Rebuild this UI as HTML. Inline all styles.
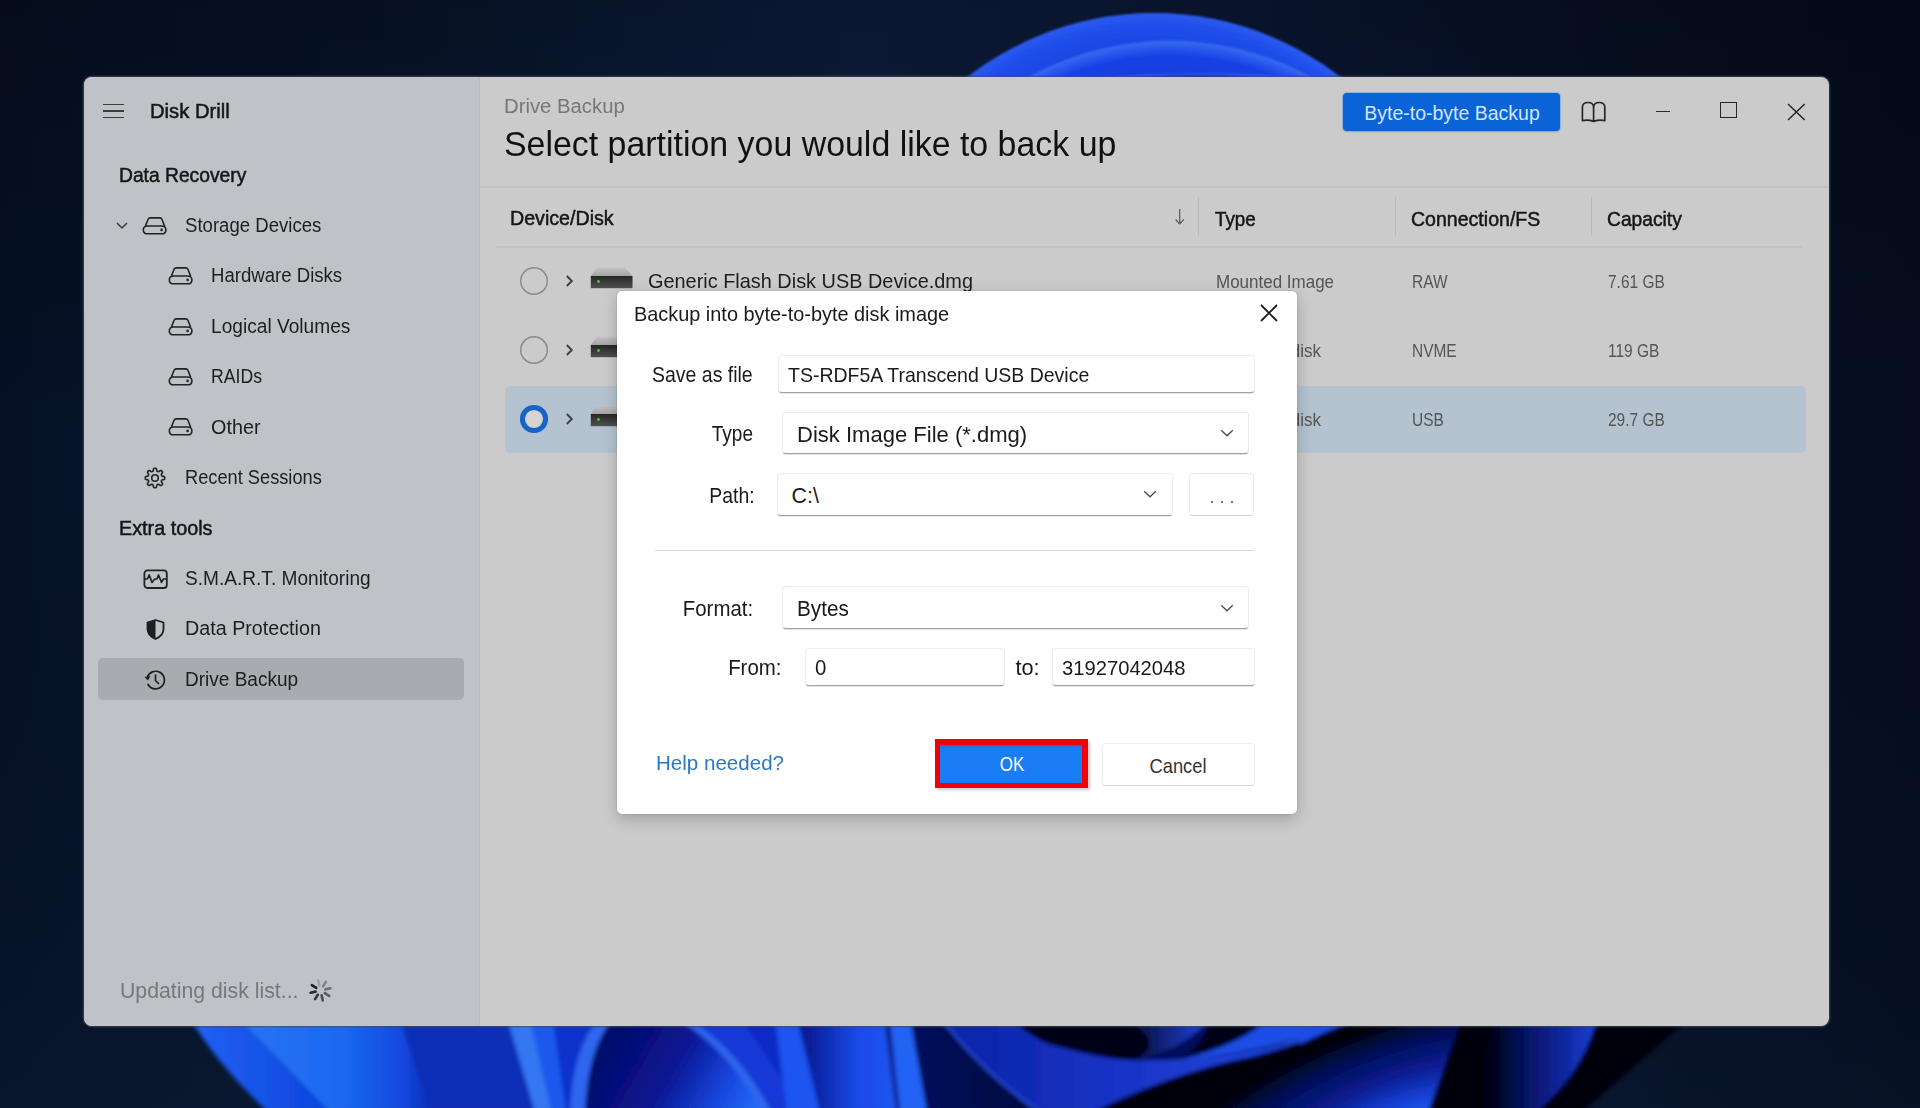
<!DOCTYPE html>
<html><head><meta charset="utf-8">
<style>
html,body{margin:0;padding:0;width:1920px;height:1108px;overflow:hidden;background:#0b1526;}
body{position:relative;font-family:"Liberation Sans", sans-serif;}
.t{position:absolute;white-space:pre;font-family:"Liberation Sans", sans-serif;}
svg{overflow:visible}
</style></head><body>
<svg style="position:absolute;left:0px;top:0px;" width="1920" height="1108" viewBox="0 0 1920 1108">
<defs>
<linearGradient id="bgG" x1="0" y1="0" x2="1920" y2="0" gradientUnits="userSpaceOnUse">
 <stop offset="0" stop-color="#061126"/>
 <stop offset="0.22" stop-color="#091730"/>
 <stop offset="0.45" stop-color="#0f2146"/>
 <stop offset="0.65" stop-color="#0c1a3a"/>
 <stop offset="0.88" stop-color="#061024"/>
 <stop offset="1" stop-color="#050d1f"/>
</linearGradient>
<linearGradient id="bgV" x1="0" y1="0" x2="0" y2="1108" gradientUnits="userSpaceOnUse">
 <stop offset="0" stop-color="#000000" stop-opacity="0.28"/>
 <stop offset="0.4" stop-color="#000000" stop-opacity="0"/>
 <stop offset="1" stop-color="#1a3050" stop-opacity="0.12"/>
</linearGradient>
<radialGradient id="arcO" cx="1154" cy="317" r="304" gradientUnits="userSpaceOnUse">
 <stop offset="0.85" stop-color="#1642de"/>
 <stop offset="0.97" stop-color="#2150ea"/>
 <stop offset="1" stop-color="#2d5cf0"/>
</radialGradient>
<radialGradient id="arcI" cx="1170" cy="335" r="294" gradientUnits="userSpaceOnUse">
 <stop offset="0.8" stop-color="#1235d0"/>
 <stop offset="0.95" stop-color="#1842e4"/>
 <stop offset="0.99" stop-color="#3062f0"/>
 <stop offset="1" stop-color="#3f6ef2"/>
</radialGradient>
<linearGradient id="pA" x1="0" y1="0" x2="1" y2="0">
 <stop offset="0" stop-color="#2a66f6"/>
 <stop offset="0.35" stop-color="#1f5cf4"/>
 <stop offset="0.7" stop-color="#0c3ad6"/>
 <stop offset="1" stop-color="#0a30c4"/>
</linearGradient>
<linearGradient id="pB" x1="0" y1="0" x2="1" y2="1">
 <stop offset="0" stop-color="#0a2aa8"/>
 <stop offset="1" stop-color="#2a66f8"/>
</linearGradient>
<linearGradient id="pC" x1="0" y1="0" x2="1" y2="0">
 <stop offset="0" stop-color="#0a2bb8"/>
 <stop offset="0.5" stop-color="#1a52ee"/>
 <stop offset="1" stop-color="#0c33c0"/>
</linearGradient>
<linearGradient id="pD" x1="0" y1="0" x2="1" y2="0">
 <stop offset="0" stop-color="#1640d0"/>
 <stop offset="1" stop-color="#0a2a9a"/>
</linearGradient>
<filter id="soft1" x="-10%" y="-10%" width="120%" height="120%"><feGaussianBlur stdDeviation="0.8"/></filter>
<filter id="soft" x="-5%" y="-50%" width="110%" height="200%"><feGaussianBlur stdDeviation="2"/></filter>
<linearGradient id="gL1" x1="190" y1="0" x2="330" y2="0" gradientUnits="userSpaceOnUse"><stop offset="0" stop-color="#2262f4"/><stop offset="1" stop-color="#0c44dc"/></linearGradient>
<linearGradient id="gL2" x1="240" y1="0" x2="430" y2="0" gradientUnits="userSpaceOnUse"><stop offset="0" stop-color="#2a74f4"/><stop offset="0.55" stop-color="#1a68f0"/><stop offset="0.85" stop-color="#1448e0"/><stop offset="1" stop-color="#0b30bc"/></linearGradient>
<linearGradient id="gCurl" x1="610" y1="1030" x2="750" y2="1112" gradientUnits="userSpaceOnUse"><stop offset="0" stop-color="#050a68"/><stop offset="0.45" stop-color="#081692"/><stop offset="0.8" stop-color="#1848e0"/><stop offset="1" stop-color="#2266f6"/></linearGradient>
<linearGradient id="gMid" x1="800" y1="0" x2="895" y2="0" gradientUnits="userSpaceOnUse"><stop offset="0" stop-color="#05158a"/><stop offset="0.6" stop-color="#1a4ae8"/><stop offset="1" stop-color="#1a55f0"/></linearGradient>
<linearGradient id="gDk" x1="910" y1="0" x2="1030" y2="0" gradientUnits="userSpaceOnUse"><stop offset="0" stop-color="#04105e"/><stop offset="1" stop-color="#020840"/></linearGradient>
<linearGradient id="gBand" x1="950" y1="0" x2="1350" y2="0" gradientUnits="userSpaceOnUse"><stop offset="0" stop-color="#0a24a6"/><stop offset="0.4" stop-color="#1833c4"/><stop offset="0.8" stop-color="#1f44dc"/><stop offset="1" stop-color="#2a58ee"/></linearGradient><radialGradient id="glow2" cx="0" cy="0" r="1" gradientUnits="userSpaceOnUse" gradientTransform="translate(1415 1125) rotate(-18) scale(270 105)"><stop offset="0" stop-color="#2464fa"/><stop offset="0.22" stop-color="#1844dc"/><stop offset="0.5" stop-color="#081c90"/><stop offset="0.78" stop-color="#040e58"/><stop offset="1" stop-color="#01030e"/></radialGradient>
<radialGradient id="glow" cx="1390" cy="1118" r="110" gradientUnits="userSpaceOnUse"><stop offset="0" stop-color="#2058f6"/><stop offset="0.35" stop-color="#123ad0"/><stop offset="0.7" stop-color="#061888" stop-opacity="0.8"/><stop offset="1" stop-color="#020838" stop-opacity="0"/></radialGradient>
<linearGradient id="gCres" x1="1120" y1="0" x2="1210" y2="0" gradientUnits="userSpaceOnUse"><stop offset="0" stop-color="#020418"/><stop offset="1" stop-color="#2244e4"/></linearGradient>
<linearGradient id="gLow" x1="1100" y1="0" x2="1460" y2="0" gradientUnits="userSpaceOnUse"><stop offset="0" stop-color="#010208"/><stop offset="0.45" stop-color="#020838"/><stop offset="0.8" stop-color="#071a90"/><stop offset="1" stop-color="#0a24a8"/></linearGradient>
<linearGradient id="gBlk" x1="1420" y1="0" x2="1530" y2="0" gradientUnits="userSpaceOnUse"><stop offset="0" stop-color="#0a24a8" stop-opacity="0"/><stop offset="0.35" stop-color="#010208"/><stop offset="0.65" stop-color="#010208"/><stop offset="1" stop-color="#06146a" stop-opacity="0"/></linearGradient>
<linearGradient id="gPD" x1="1470" y1="0" x2="1597" y2="0" gradientUnits="userSpaceOnUse"><stop offset="0" stop-color="#010208" stop-opacity="0"/><stop offset="0.35" stop-color="#040c50"/><stop offset="0.7" stop-color="#0c2598"/><stop offset="1" stop-color="#1c40d4"/></linearGradient>
</defs>
<rect x="0" y="0" width="1920" height="1108" fill="url(#bgG)"/>
<rect x="0" y="0" width="1920" height="1108" fill="url(#bgV)"/>
<!-- top arcs -->
<g filter="url(#soft1)">
<circle cx="1154" cy="317" r="304" fill="url(#arcO)"/>
<circle cx="1170" cy="335" r="294" fill="url(#arcI)"/>
<ellipse cx="1200" cy="112" rx="110" ry="38" fill="#0f2cb6"/>
<path d="M1090 80 Q1200 68 1310 80" fill="none" stroke="#3560ea" stroke-width="2" opacity="0.8"/>
</g>
<!-- bottom petals -->
<g filter="url(#soft)">
<path d="M190,1018 Q218,1065 268,1112 L1582,1112 L1690,1018 Z" fill="#0c2cb8"/>
<path d="M190,1018 Q218,1065 268,1112 L330,1112 L239,1018 Z" fill="url(#gL1)"/>
<path d="M239,1018 L400,1018 L430,1112 L330,1112 Z" fill="url(#gL2)"/>
<path d="M400,1018 L509,1018 L537,1112 L430,1112 Z" fill="#0a2eb6"/>
<path d="M507,1018 L530,1018 L552,1112 L535,1112 Z" fill="#3676f2"/>
<path d="M530,1018 L553,1018 L566,1112 L552,1112 Z" fill="#1c58ee"/>
<path d="M553,1018 L602,1018 Q578,1050 573,1112 L566,1112 Z" fill="#0b33cc"/>
<path d="M600,1018 Q573,1045 570,1112 L772,1112 Q736,1045 686,1018 Z" fill="#2d66f0"/>
<path d="M613,1018 Q587,1050 585,1112 L762,1112 Q728,1048 676,1018 Z" fill="url(#gCurl)"/>
<path d="M686,1018 L740,1018 Q772,1060 800,1112 L772,1112 Q736,1045 686,1018 Z" fill="#1538d6"/>
<path d="M740,1018 L776,1018 L790,1112 L800,1112 Q772,1060 740,1018 Z" fill="#0c2bc6"/>
<path d="M775,1018 L797,1018 L820,1112 L787,1112 Z" fill="#1f55f0"/>
<path d="M797,1018 L884,1018 L900,1112 L820,1112 Z" fill="url(#gMid)"/>
<path d="M884,1018 L890,1018 L902,1112 L896,1112 Z" fill="#0a1c90"/>
<path d="M890,1018 L910,1018 L927,1112 L900,1112 Z" fill="#2262f5"/>
<path d="M910,1018 L941,1018 Q985,1075 1040,1112 L927,1112 Z" fill="url(#gDk)"/>
<path d="M1040,1112 Q1160,1079 1227,1062 Q1293,1049 1356,1018 L1690,1018 L1582,1112 Z" fill="#010208"/>
<path d="M1040,1112 Q1160,1079 1227,1062 Q1293,1049 1356,1018 L1462,1018 L1428,1112 Z" fill="url(#glow2)"/>
<path d="M1497,1018 L1597,1018 Q1585,1070 1537,1112 L1460,1112 Z" fill="url(#gPD)"/>
<path d="M941,1018 Q985,1075 1040,1112 L1093,1112 Q1160,1079 1227,1062 Q1293,1049 1356,1018 Z" fill="url(#gBand)"/>
<path d="M941,1018 Q985,1075 1040,1112" fill="none" stroke="#2c54e6" stroke-width="2"/>
<path d="M1010,1018 Q1040,1045 1060,1047 Q1100,1058 1127,1060 Q1200,1062 1280,1045 L1356,1018 Z" fill="#020418"/>
<path d="M1120,1018 L1210,1018 Q1185,1050 1135,1060 Q1170,1040 1120,1018 Z" fill="url(#gCres)"/>
<path d="M1210,1018 Q1185,1050 1135,1060 Q1200,1062 1280,1045 L1356,1018 L1270,1018 Q1240,1045 1180,1058 Q1205,1045 1210,1018 Z" fill="#030a5c"/>
<path d="M1270,1018 L1356,1018 Q1290,1048 1180,1060 Q1240,1045 1270,1018 Z" fill="#1e4ee6"/>
<path d="M1300,1018 L1355,1018 L1300,1044 Z" fill="#1c4ce8"/>
<path d="M1597,1018 L1690,1018 L1582,1112 L1537,1112 Q1585,1070 1597,1018 Z" fill="#02040e"/>
</g>
</svg><div style="position:absolute;left:84px;top:77px;width:1745px;height:949px;border-radius:8px;background:#cbcbcb;overflow:hidden;box-shadow:0 0 0 1.5px rgba(70,78,92,0.55);"></div><div style="position:absolute;left:84px;top:77px;width:396px;height:949px;border-radius:8px 0 0 8px;background:#bfc2c7;"></div><div style="position:absolute;left:478.5px;top:77px;width:1.5px;height:949px;background:#babac0;"></div><div style="position:absolute;left:480px;top:186px;width:1349px;height:2px;background:#c2c2c2;"></div><div style="position:absolute;left:103px;top:103.8px;width:21px;height:1.5999999999999943px;background:#3c3c3c;"></div><div style="position:absolute;left:103px;top:110.3px;width:21px;height:1.5999999999999943px;background:#3c3c3c;"></div><div style="position:absolute;left:103px;top:116.8px;width:21px;height:1.5999999999999943px;background:#3c3c3c;"></div><div class="t" style="left:149.5px;top:101.00px;font-size:20.35px;line-height:20.35px;font-weight:400;color:#161616;transform:scaleX(0.9933962264150942);transform-origin:0 0;-webkit-text-stroke:0.5px #161616;">Disk Drill</div><div class="t" style="left:119.2px;top:166.00px;font-size:19.93px;line-height:19.93px;font-weight:400;color:#161616;transform:scaleX(0.9660377358490566);transform-origin:0 0;-webkit-text-stroke:0.5px #161616;">Data Recovery</div><div class="t" style="left:119.2px;top:519.00px;font-size:19.93px;line-height:19.93px;font-weight:400;color:#161616;transform:scaleX(0.9933962264150942);transform-origin:0 0;-webkit-text-stroke:0.5px #161616;">Extra tools</div><svg style="position:absolute;left:116px;top:222px;" width="12" height="8" viewBox="0 0 12 8"><path d="M1 1 L6 6 L11 1" fill="none" stroke="#3a3a3a" stroke-width="1.5"/></svg><svg style="position:absolute;left:143px;top:216.5px;" width="24" height="18" viewBox="0 0 24 18"><path d="M2.4 9 L5.1 2.3 Q5.7 0.9 7.2 0.9 L16.8 0.9 Q18.3 0.9 18.9 2.3 L21.6 9 M4.6 9 L18.6 9 Q22.9 9 22.9 12.9 Q22.9 16.8 18.6 16.8 L4.6 16.8 Q0.3 16.8 0.3 12.9 Q0.3 9 4.6 9 Z" fill="none" stroke="#232323" stroke-width="1.6" stroke-linejoin="round"/><circle cx="18.6" cy="12.9" r="1.3" fill="#232323"/></svg><div class="t" style="left:184.8px;top:216.00px;font-size:19.34px;line-height:19.34px;font-weight:400;color:#1e1e1e;transform:scaleX(0.9615384615384615);transform-origin:0 0;">Storage Devices</div><svg style="position:absolute;left:169px;top:267.1px;" width="24" height="18" viewBox="0 0 24 18"><path d="M2.4 9 L5.1 2.3 Q5.7 0.9 7.2 0.9 L16.8 0.9 Q18.3 0.9 18.9 2.3 L21.6 9 M4.6 9 L18.6 9 Q22.9 9 22.9 12.9 Q22.9 16.8 18.6 16.8 L4.6 16.8 Q0.3 16.8 0.3 12.9 Q0.3 9 4.6 9 Z" fill="none" stroke="#232323" stroke-width="1.6" stroke-linejoin="round"/><circle cx="18.6" cy="12.9" r="1.3" fill="#232323"/></svg><div class="t" style="left:211.2px;top:266.00px;font-size:19.34px;line-height:19.34px;font-weight:400;color:#1e1e1e;transform:scaleX(0.9615384615384615);transform-origin:0 0;">Hardware Disks</div><svg style="position:absolute;left:169px;top:317.8px;" width="24" height="18" viewBox="0 0 24 18"><path d="M2.4 9 L5.1 2.3 Q5.7 0.9 7.2 0.9 L16.8 0.9 Q18.3 0.9 18.9 2.3 L21.6 9 M4.6 9 L18.6 9 Q22.9 9 22.9 12.9 Q22.9 16.8 18.6 16.8 L4.6 16.8 Q0.3 16.8 0.3 12.9 Q0.3 9 4.6 9 Z" fill="none" stroke="#232323" stroke-width="1.6" stroke-linejoin="round"/><circle cx="18.6" cy="12.9" r="1.3" fill="#232323"/></svg><div class="t" style="left:211.2px;top:317.00px;font-size:19.34px;line-height:19.34px;font-weight:400;color:#1e1e1e;transform:scaleX(0.9903846153846154);transform-origin:0 0;">Logical Volumes</div><svg style="position:absolute;left:169px;top:368.1px;" width="24" height="18" viewBox="0 0 24 18"><path d="M2.4 9 L5.1 2.3 Q5.7 0.9 7.2 0.9 L16.8 0.9 Q18.3 0.9 18.9 2.3 L21.6 9 M4.6 9 L18.6 9 Q22.9 9 22.9 12.9 Q22.9 16.8 18.6 16.8 L4.6 16.8 Q0.3 16.8 0.3 12.9 Q0.3 9 4.6 9 Z" fill="none" stroke="#232323" stroke-width="1.6" stroke-linejoin="round"/><circle cx="18.6" cy="12.9" r="1.3" fill="#232323"/></svg><div class="t" style="left:211.2px;top:367.00px;font-size:19.34px;line-height:19.34px;font-weight:400;color:#1e1e1e;transform:scaleX(0.9144230769230769);transform-origin:0 0;">RAIDs</div><svg style="position:absolute;left:169px;top:418.3px;" width="24" height="18" viewBox="0 0 24 18"><path d="M2.4 9 L5.1 2.3 Q5.7 0.9 7.2 0.9 L16.8 0.9 Q18.3 0.9 18.9 2.3 L21.6 9 M4.6 9 L18.6 9 Q22.9 9 22.9 12.9 Q22.9 16.8 18.6 16.8 L4.6 16.8 Q0.3 16.8 0.3 12.9 Q0.3 9 4.6 9 Z" fill="none" stroke="#232323" stroke-width="1.6" stroke-linejoin="round"/><circle cx="18.6" cy="12.9" r="1.3" fill="#232323"/></svg><div class="t" style="left:211.2px;top:418.00px;font-size:19.34px;line-height:19.34px;font-weight:400;color:#1e1e1e;transform:scaleX(1.0240384615384615);transform-origin:0 0;">Other</div><svg style="position:absolute;left:143.7px;top:466.5px;" width="22" height="22" viewBox="0 0 22 22"><path d="M20.75 11.00 L20.74 11.32 L20.70 11.64 L20.62 11.95 L20.43 12.24 L19.99 12.48 L19.24 12.64 L18.49 12.75 L18.04 12.89 L17.83 13.07 L17.70 13.27 L17.60 13.49 L17.51 13.70 L17.43 13.91 L17.35 14.13 L17.29 14.36 L17.32 14.65 L17.53 15.06 L17.98 15.67 L18.41 16.31 L18.54 16.79 L18.47 17.13 L18.31 17.41 L18.11 17.66 L17.89 17.89 L17.66 18.11 L17.41 18.31 L17.13 18.47 L16.79 18.54 L16.31 18.41 L15.67 17.98 L15.06 17.53 L14.65 17.32 L14.36 17.29 L14.13 17.35 L13.91 17.43 L13.70 17.51 L13.49 17.60 L13.27 17.70 L13.07 17.83 L12.89 18.04 L12.75 18.49 L12.64 19.24 L12.48 19.99 L12.24 20.43 L11.95 20.62 L11.64 20.70 L11.32 20.74 L11.00 20.75 L10.68 20.74 L10.36 20.70 L10.05 20.62 L9.76 20.43 L9.52 19.99 L9.36 19.24 L9.25 18.49 L9.11 18.04 L8.93 17.83 L8.73 17.70 L8.51 17.60 L8.30 17.51 L8.09 17.43 L7.87 17.35 L7.64 17.29 L7.35 17.32 L6.94 17.53 L6.33 17.98 L5.69 18.41 L5.21 18.54 L4.87 18.47 L4.59 18.31 L4.34 18.11 L4.11 17.89 L3.89 17.66 L3.69 17.41 L3.53 17.13 L3.46 16.79 L3.59 16.31 L4.02 15.67 L4.47 15.06 L4.68 14.65 L4.71 14.36 L4.65 14.13 L4.57 13.91 L4.49 13.70 L4.40 13.49 L4.30 13.27 L4.17 13.07 L3.96 12.89 L3.51 12.75 L2.76 12.64 L2.01 12.48 L1.57 12.24 L1.38 11.95 L1.30 11.64 L1.26 11.32 L1.25 11.00 L1.26 10.68 L1.30 10.36 L1.38 10.05 L1.57 9.76 L2.01 9.52 L2.76 9.36 L3.51 9.25 L3.96 9.11 L4.17 8.93 L4.30 8.73 L4.40 8.51 L4.49 8.30 L4.57 8.09 L4.65 7.87 L4.71 7.64 L4.68 7.35 L4.47 6.94 L4.02 6.33 L3.59 5.69 L3.46 5.21 L3.53 4.87 L3.69 4.59 L3.89 4.34 L4.11 4.11 L4.34 3.89 L4.59 3.69 L4.87 3.53 L5.21 3.46 L5.69 3.59 L6.33 4.02 L6.94 4.47 L7.35 4.68 L7.64 4.71 L7.87 4.65 L8.09 4.57 L8.30 4.49 L8.51 4.40 L8.73 4.30 L8.93 4.17 L9.11 3.96 L9.25 3.51 L9.36 2.76 L9.52 2.01 L9.76 1.57 L10.05 1.38 L10.36 1.30 L10.68 1.26 L11.00 1.25 L11.32 1.26 L11.64 1.30 L11.95 1.38 L12.24 1.57 L12.48 2.01 L12.64 2.76 L12.75 3.51 L12.89 3.96 L13.07 4.17 L13.27 4.30 L13.49 4.40 L13.70 4.49 L13.91 4.57 L14.13 4.65 L14.36 4.71 L14.65 4.68 L15.06 4.47 L15.67 4.02 L16.31 3.59 L16.79 3.46 L17.13 3.53 L17.41 3.69 L17.66 3.89 L17.89 4.11 L18.11 4.34 L18.31 4.59 L18.47 4.87 L18.54 5.21 L18.41 5.69 L17.98 6.33 L17.53 6.94 L17.32 7.35 L17.29 7.64 L17.35 7.87 L17.43 8.09 L17.51 8.30 L17.60 8.51 L17.70 8.73 L17.83 8.93 L18.04 9.11 L18.49 9.25 L19.24 9.36 L19.99 9.52 L20.43 9.76 L20.62 10.05 L20.70 10.36 L20.74 10.68 Z" fill="none" stroke="#232323" stroke-width="1.6" stroke-linejoin="round"/><circle cx="11" cy="11" r="3.3" fill="none" stroke="#232323" stroke-width="1.6"/></svg><div class="t" style="left:184.8px;top:468.00px;font-size:19.34px;line-height:19.34px;font-weight:400;color:#1e1e1e;transform:scaleX(0.9432692307692307);transform-origin:0 0;">Recent Sessions</div><svg style="position:absolute;left:142.5px;top:568.5px;" width="25" height="21" viewBox="0 0 25 21"><rect x="1.4" y="1.4" width="22.4" height="17.6" rx="3" fill="none" stroke="#222" stroke-width="1.8"/><path d="M2 10 L4.4 10 L6.2 5.9 L9 13.4 L11.7 10 L13.9 10 L15.5 5.9 L18.5 13.4 L20.4 10 L23 10" fill="none" stroke="#222" stroke-width="1.6" stroke-linejoin="round"/></svg><div class="t" style="left:184.8px;top:569.00px;font-size:19.34px;line-height:19.34px;font-weight:400;color:#1e1e1e;transform:scaleX(0.9874999999999999);transform-origin:0 0;">S.M.A.R.T. Monitoring</div><svg style="position:absolute;left:145.5px;top:618.5px;" width="19" height="21" viewBox="0 0 19 21"><path d="M9.5 1 L17.5 3.5 L17.5 10 Q17.5 16.5 9.5 20 Q1.5 16.5 1.5 10 L1.5 3.5 Z" fill="none" stroke="#1e1e1e" stroke-width="1.8" stroke-linejoin="round"/><path d="M9.5 1 L1.5 3.5 L1.5 10 Q1.5 16.5 9.5 20 Z" fill="#1e1e1e"/></svg><div class="t" style="left:184.8px;top:619.00px;font-size:19.34px;line-height:19.34px;font-weight:400;color:#1e1e1e;transform:scaleX(1.0201923076923076);transform-origin:0 0;">Data Protection</div><div style="position:absolute;left:98.3px;top:658px;width:365.7px;height:41.60000000000002px;border-radius:5px;background:#a9abb0;"></div><svg style="position:absolute;left:143px;top:668.5px;" width="24" height="22" viewBox="0 0 24 22"><path d="M4.2 8.5 A8.8 8.8 0 1 1 5 15.5" fill="none" stroke="#1e1e1e" stroke-width="1.7" stroke-linecap="round"/><path d="M1.5 8 L5 11.5 L7.5 7 Z" fill="#1e1e1e"/><path d="M12.5 6 L12.5 11.5 L15.5 14.5" fill="none" stroke="#1e1e1e" stroke-width="1.7" stroke-linecap="round"/></svg><div class="t" style="left:184.8px;top:670.00px;font-size:19.34px;line-height:19.34px;font-weight:400;color:#1e1e1e;transform:scaleX(0.983653846153846);transform-origin:0 0;">Drive Backup</div><div class="t" style="left:119.6px;top:981.00px;font-size:21.42px;line-height:21.42px;font-weight:400;color:#76787c;transform:scaleX(0.9932692307692307);transform-origin:0 0;">Updating disk list...</div><svg style="position:absolute;left:309px;top:979px;" width="23" height="23" viewBox="0 0 23 23"><line x1="16.37" y1="10.38" x2="21.44" y2="9.21" stroke="#1e2024" stroke-width="2.6" stroke-linecap="round" opacity="0.5"/><line x1="15.74" y1="14.15" x2="20.15" y2="16.91" stroke="#1e2024" stroke-width="2.6" stroke-linecap="round" opacity="0.62"/><line x1="12.62" y1="16.37" x2="13.79" y2="21.44" stroke="#1e2024" stroke-width="2.6" stroke-linecap="round" opacity="0.72"/><line x1="8.85" y1="15.74" x2="6.09" y2="20.15" stroke="#1e2024" stroke-width="2.6" stroke-linecap="round" opacity="0.85"/><line x1="6.63" y1="12.62" x2="1.56" y2="13.79" stroke="#1e2024" stroke-width="2.6" stroke-linecap="round" opacity="0.92"/><line x1="7.26" y1="8.85" x2="2.85" y2="6.09" stroke="#1e2024" stroke-width="2.6" stroke-linecap="round" opacity="1.0"/><line x1="10.38" y1="6.63" x2="9.21" y2="1.56" stroke="#1e2024" stroke-width="2.6" stroke-linecap="round" opacity="0.18"/><line x1="14.15" y1="7.26" x2="16.91" y2="2.85" stroke="#1e2024" stroke-width="2.6" stroke-linecap="round" opacity="0.38"/></svg><div class="t" style="left:504px;top:96.00px;font-size:20.18px;line-height:20.18px;font-weight:400;color:#777777;transform:scaleX(1.0067307692307692);transform-origin:0 0;">Drive Backup</div><div class="t" style="left:503.5px;top:126.00px;font-size:35.26px;line-height:35.26px;font-weight:400;color:#111111;transform:scaleX(0.9615384615384615);transform-origin:0 0;">Select partition you would like to back up</div><div style="position:absolute;left:1343.4px;top:92.8px;width:216.5999999999999px;height:38.2px;border-radius:4px;background:#0a64d8;box-shadow:0 0 0 1px rgba(110,160,235,0.55), 0 1px 2px rgba(0,0,0,0.15);"></div><div class="t" style="left:1451.7px;transform:translateX(-50%);top:103.00px;font-size:20.28px;line-height:20.28px;font-weight:400;color:#d2e4fb;transform:translateX(-50%) scaleX(0.9615384615384615);transform-origin:50% 0;">Byte-to-byte Backup</div><svg style="position:absolute;left:1581px;top:101px;" width="26" height="22" viewBox="0 0 26 22"><path d="M1.4 19.6 L1.4 6.5 Q1.4 1.5 7 1.5 Q12.6 1.5 12.6 6.5 L12.6 20.2 M12.6 6.5 Q12.6 1.5 18.2 1.5 Q23.8 1.5 23.8 6.5 L23.8 19.6 M1.4 19.6 Q7 18.4 12.6 20.4 Q18.2 18.4 23.8 19.6" fill="none" stroke="#262626" stroke-width="1.7" stroke-linejoin="round" stroke-linecap="round"/></svg><div style="position:absolute;left:1655.7px;top:110.5px;width:14.299999999999955px;height:1.2999999999999972px;background:#2a2a2a;"></div><div style="position:absolute;left:1720px;top:102px;width:16.700000000000045px;height:16.400000000000006px;border:1.5px solid #262626;box-sizing:border-box;"></div><svg style="position:absolute;left:1786.7px;top:102.7px;" width="19" height="18" viewBox="0 0 19 18"><path d="M1 1 L17.7 17 M17.7 1 L1 17" stroke="#262626" stroke-width="1.5"/></svg><div class="t" style="left:510.2px;top:209.00px;font-size:19.93px;line-height:19.93px;font-weight:400;color:#161616;transform:scaleX(0.9858490566037734);transform-origin:0 0;-webkit-text-stroke:0.5px #161616;">Device/Disk</div><svg style="position:absolute;left:1173px;top:207.5px;" width="14" height="18" viewBox="0 0 14 18"><path d="M6.7 1 L6.7 15.8 M2.6 11.5 L6.7 15.8 L10.8 11.5" fill="none" stroke="#585858" stroke-width="1.2"/></svg><div style="position:absolute;left:1197.8px;top:197px;width:1.0px;height:39px;background:#b9b9b9;"></div><div style="position:absolute;left:1394.7px;top:197px;width:1.0px;height:39px;background:#b9b9b9;"></div><div style="position:absolute;left:1590.8px;top:197px;width:1.0px;height:39px;background:#b9b9b9;"></div><div class="t" style="left:1214.7px;top:210.00px;font-size:19.93px;line-height:19.93px;font-weight:400;color:#161616;transform:scaleX(0.9433962264150942);transform-origin:0 0;-webkit-text-stroke:0.5px #161616;">Type</div><div class="t" style="left:1410.5px;top:210.00px;font-size:19.93px;line-height:19.93px;font-weight:400;color:#161616;transform:scaleX(0.9811320754716981);transform-origin:0 0;-webkit-text-stroke:0.5px #161616;">Connection/FS</div><div class="t" style="left:1606.6px;top:210.00px;font-size:19.93px;line-height:19.93px;font-weight:400;color:#161616;transform:scaleX(0.9650943396226414);transform-origin:0 0;-webkit-text-stroke:0.5px #161616;">Capacity</div><div style="position:absolute;left:495.6px;top:246px;width:1307.9px;height:1.5px;background:#c1c1c1;"></div><div style="position:absolute;left:505px;top:386px;width:1300.6px;height:66.5px;border-radius:5px;background:#b4c3cf;"></div><svg style="position:absolute;left:519px;top:266.2px;" width="30" height="30" viewBox="0 0 30 30"><circle cx="15" cy="15" r="13.3" fill="none" stroke="#8b8b8b" stroke-width="1.5"/></svg><svg style="position:absolute;left:565px;top:275.2px;" width="10" height="12" viewBox="0 0 10 12"><path d="M1.8 1 L6.8 6 L1.8 11" fill="none" stroke="#404040" stroke-width="1.9"/></svg><svg style="position:absolute;left:590px;top:267.2px;" width="44" height="22" viewBox="0 0 44 22"><defs><linearGradient id="dtop" x1="0" y1="0" x2="0" y2="1"><stop offset="0" stop-color="#c4c4c4"/><stop offset="1" stop-color="#a3a3a3"/></linearGradient><linearGradient id="dbot" x1="0" y1="0" x2="0" y2="1"><stop offset="0" stop-color="#262626"/><stop offset="1" stop-color="#505050"/></linearGradient></defs><path d="M7 0.5 L35 0.5 L42.5 9 L0.8 9 Z" fill="url(#dtop)"/><rect x="0.8" y="9" width="41.7" height="12.2" fill="url(#dbot)"/><circle cx="8.5" cy="14.5" r="1.4" fill="#46c846"/></svg><div class="t" style="left:647.8px;top:271.00px;font-size:20.7px;line-height:20.7px;font-weight:400;color:#1e1e1e;transform:scaleX(0.9615384615384615);transform-origin:0 0;">Generic Flash Disk USB Device.dmg</div><div class="t" style="left:1216.3px;top:274.00px;font-size:17.68px;line-height:17.68px;font-weight:400;color:#555555;transform:scaleX(0.9615384615384615);transform-origin:0 0;">Mounted Image</div><div class="t" style="left:1412px;top:274.00px;font-size:17.68px;line-height:17.68px;font-weight:400;color:#555555;transform:scaleX(0.875);transform-origin:0 0;">RAW</div><div class="t" style="left:1608px;top:274.00px;font-size:17.68px;line-height:17.68px;font-weight:400;color:#555555;transform:scaleX(0.875);transform-origin:0 0;">7.61 GB</div><svg style="position:absolute;left:519px;top:335px;" width="30" height="30" viewBox="0 0 30 30"><circle cx="15" cy="15" r="13.3" fill="none" stroke="#8b8b8b" stroke-width="1.5"/></svg><svg style="position:absolute;left:565px;top:344px;" width="10" height="12" viewBox="0 0 10 12"><path d="M1.8 1 L6.8 6 L1.8 11" fill="none" stroke="#404040" stroke-width="1.9"/></svg><svg style="position:absolute;left:590px;top:336px;" width="44" height="22" viewBox="0 0 44 22"><defs><linearGradient id="dtop" x1="0" y1="0" x2="0" y2="1"><stop offset="0" stop-color="#c4c4c4"/><stop offset="1" stop-color="#a3a3a3"/></linearGradient><linearGradient id="dbot" x1="0" y1="0" x2="0" y2="1"><stop offset="0" stop-color="#262626"/><stop offset="1" stop-color="#505050"/></linearGradient></defs><path d="M7 0.5 L35 0.5 L42.5 9 L0.8 9 Z" fill="url(#dtop)"/><rect x="0.8" y="9" width="41.7" height="12.2" fill="url(#dbot)"/><circle cx="8.5" cy="14.5" r="1.4" fill="#46c846"/></svg><div class="t" style="right:599px;top:343.00px;font-size:17.68px;line-height:17.68px;font-weight:400;color:#555555;transform:scaleX(0.9615384615384615);transform-origin:100% 0;">Hardware disk</div><div class="t" style="left:1412px;top:343.00px;font-size:17.68px;line-height:17.68px;font-weight:400;color:#555555;transform:scaleX(0.875);transform-origin:0 0;">NVME</div><div class="t" style="left:1608px;top:343.00px;font-size:17.68px;line-height:17.68px;font-weight:400;color:#555555;transform:scaleX(0.875);transform-origin:0 0;">119 GB</div><svg style="position:absolute;left:519px;top:404.3px;" width="30" height="30" viewBox="0 0 30 30"><circle cx="15" cy="15" r="9" fill="#d6d4d2"/><circle cx="15" cy="15" r="11.6" fill="none" stroke="#1862c8" stroke-width="5"/></svg><svg style="position:absolute;left:565px;top:413.3px;" width="10" height="12" viewBox="0 0 10 12"><path d="M1.8 1 L6.8 6 L1.8 11" fill="none" stroke="#404040" stroke-width="1.9"/></svg><svg style="position:absolute;left:590px;top:405.3px;" width="44" height="22" viewBox="0 0 44 22"><defs><linearGradient id="dtop" x1="0" y1="0" x2="0" y2="1"><stop offset="0" stop-color="#c4c4c4"/><stop offset="1" stop-color="#a3a3a3"/></linearGradient><linearGradient id="dbot" x1="0" y1="0" x2="0" y2="1"><stop offset="0" stop-color="#262626"/><stop offset="1" stop-color="#505050"/></linearGradient></defs><path d="M7 0.5 L35 0.5 L42.5 9 L0.8 9 Z" fill="url(#dtop)"/><rect x="0.8" y="9" width="41.7" height="12.2" fill="url(#dbot)"/><circle cx="8.5" cy="14.5" r="1.4" fill="#46c846"/></svg><div class="t" style="right:599px;top:412.00px;font-size:17.68px;line-height:17.68px;font-weight:400;color:#555555;transform:scaleX(0.9615384615384615);transform-origin:100% 0;">Hardware disk</div><div class="t" style="left:1412px;top:412.00px;font-size:17.68px;line-height:17.68px;font-weight:400;color:#555555;transform:scaleX(0.875);transform-origin:0 0;">USB</div><div class="t" style="left:1608px;top:412.00px;font-size:17.68px;line-height:17.68px;font-weight:400;color:#555555;transform:scaleX(0.875);transform-origin:0 0;">29.7 GB</div><div style="position:absolute;left:616.5px;top:291.2px;width:680.5px;height:522.5999999999999px;border-radius:5px;background:#ffffff;box-shadow:0 5px 16px rgba(0,0,0,0.22), 0 0 0 1px rgba(0,0,0,0.06);"></div><div class="t" style="left:633.5px;top:304.00px;font-size:20.7px;line-height:20.7px;font-weight:400;color:#1a1a1a;transform:scaleX(0.9615384615384615);transform-origin:0 0;">Backup into byte-to-byte disk image</div><svg style="position:absolute;left:1259px;top:302.5px;" width="20" height="20" viewBox="0 0 20 20"><path d="M2 2 L18 18 M18 2 L2 18" stroke="#1e1e1e" stroke-width="1.8"/></svg><div class="t" style="right:1167.2px;top:364.00px;font-size:21.22px;line-height:21.22px;font-weight:400;color:#1a1a1a;transform:scaleX(0.9182692307692307);transform-origin:100% 0;">Save as file</div><div style="position:absolute;left:777.5px;top:354.6px;width:477.9000000000001px;height:38.39999999999998px;box-sizing:border-box;border-radius:4px;background:#fff;border:1px solid #ececec;border-bottom:1px solid #a2a2a2;box-shadow:0 1px 0.5px rgba(0,0,0,0.10);"></div><div class="t" style="left:788px;top:365.00px;font-size:20.6px;line-height:20.6px;font-weight:400;color:#1a1a1a;transform:scaleX(0.947);transform-origin:0 0;">TS-RDF5A Transcend USB Device</div><div class="t" style="right:1167.2px;top:423.00px;font-size:21.22px;line-height:21.22px;font-weight:400;color:#1a1a1a;transform:scaleX(0.8971153846153846);transform-origin:100% 0;">Type</div><div style="position:absolute;left:781.5px;top:411.5px;width:467.9000000000001px;height:42.89999999999998px;box-sizing:border-box;border-radius:4px;background:#fff;border:1px solid #ececec;border-bottom:1px solid #a2a2a2;box-shadow:0 1px 0.5px rgba(0,0,0,0.10);"></div><div class="t" style="left:797px;top:423.00px;font-size:22.7px;line-height:22.7px;font-weight:400;color:#1a1a1a;transform:scaleX(0.971);transform-origin:0 0;">Disk Image File (*.dmg)</div><svg style="position:absolute;left:1219.6px;top:428px;" width="14" height="10" viewBox="0 0 14 10"><path d="M1.2 2.2 L7 7.8 L12.8 2.2" fill="none" stroke="#4a4a4a" stroke-width="1.3"/></svg><div class="t" style="right:1165.8px;top:485.00px;font-size:21.22px;line-height:21.22px;font-weight:400;color:#1a1a1a;transform:scaleX(0.9134615384615384);transform-origin:100% 0;">Path:</div><div style="position:absolute;left:776.6px;top:473px;width:396.4px;height:43.299999999999955px;box-sizing:border-box;border-radius:4px;background:#fff;border:1px solid #ececec;border-bottom:1px solid #a2a2a2;box-shadow:0 1px 0.5px rgba(0,0,0,0.10);"></div><div class="t" style="left:791.5px;top:486.00px;font-size:21.4px;line-height:21.4px;font-weight:400;color:#1a1a1a;">C:\</div><svg style="position:absolute;left:1143.2px;top:489.3px;" width="14" height="10" viewBox="0 0 14 10"><path d="M1.2 2.2 L7 7.8 L12.8 2.2" fill="none" stroke="#4a4a4a" stroke-width="1.3"/></svg><div style="position:absolute;left:1189px;top:473px;width:65.29999999999995px;height:42.5px;box-sizing:border-box;border-radius:4px;background:#fff;border:1px solid #e8e8e8;border-bottom:1.5px solid #d0d0d0;"></div><div style="position:absolute;left:1211px;top:500.7px;width:2px;height:2.0px;border-radius:1px;background:#444;"></div><div style="position:absolute;left:1221px;top:500.7px;width:2px;height:2.0px;border-radius:1px;background:#444;"></div><div style="position:absolute;left:1231px;top:500.7px;width:2px;height:2.0px;border-radius:1px;background:#444;"></div><div style="position:absolute;left:655px;top:550.3px;width:600px;height:1.2000000000000455px;background:#d9d9d9;"></div><div class="t" style="right:1167px;top:598.00px;font-size:21.22px;line-height:21.22px;font-weight:400;color:#1a1a1a;transform:scaleX(0.9615384615384615);transform-origin:100% 0;">Format:</div><div style="position:absolute;left:781.7px;top:586.2px;width:467.70000000000005px;height:43.19999999999993px;box-sizing:border-box;border-radius:4px;background:#fff;border:1px solid #ececec;border-bottom:1px solid #a2a2a2;box-shadow:0 1px 0.5px rgba(0,0,0,0.10);"></div><div class="t" style="left:797.2px;top:597.00px;font-size:22.7px;line-height:22.7px;font-weight:400;color:#1a1a1a;transform:scaleX(0.915);transform-origin:0 0;">Bytes</div><svg style="position:absolute;left:1219.6px;top:602.5px;" width="14" height="10" viewBox="0 0 14 10"><path d="M1.2 2.2 L7 7.8 L12.8 2.2" fill="none" stroke="#4a4a4a" stroke-width="1.3"/></svg><div class="t" style="right:1138.7px;top:657.00px;font-size:21.22px;line-height:21.22px;font-weight:400;color:#1a1a1a;transform:scaleX(0.9615384615384615);transform-origin:100% 0;">From:</div><div style="position:absolute;left:805.2px;top:647.7px;width:200.0999999999999px;height:38.69999999999993px;box-sizing:border-box;border-radius:4px;background:#fff;border:1px solid #ececec;border-bottom:1px solid #a2a2a2;box-shadow:0 1px 0.5px rgba(0,0,0,0.10);"></div><div class="t" style="left:815.3px;top:657.00px;font-size:21.22px;line-height:21.22px;font-weight:400;color:#1a1a1a;transform:scaleX(0.9615384615384615);transform-origin:0 0;">0</div><div class="t" style="right:880px;top:657.00px;font-size:21.22px;line-height:21.22px;font-weight:400;color:#1a1a1a;transform:scaleX(1.023076923076923);transform-origin:100% 0;">to:</div><div style="position:absolute;left:1052px;top:648px;width:202.5999999999999px;height:38px;box-sizing:border-box;border-radius:4px;background:#fff;border:1px solid #ececec;border-bottom:1px solid #a2a2a2;box-shadow:0 1px 0.5px rgba(0,0,0,0.10);"></div><div class="t" style="left:1062.3px;top:657.00px;font-size:21.01px;line-height:21.01px;font-weight:400;color:#1a1a1a;transform:scaleX(0.9615384615384615);transform-origin:0 0;">31927042048</div><div class="t" style="left:656.4px;top:752.00px;font-size:21.11px;line-height:21.11px;font-weight:400;color:#2b77c0;transform:scaleX(0.9740384615384614);transform-origin:0 0;">Help needed?</div><div style="position:absolute;left:934.5px;top:739px;width:153.29999999999995px;height:49.10000000000002px;background:#f20008;box-shadow:2px 2px 3px rgba(0,0,0,0.22);"></div><div style="position:absolute;left:940.2px;top:744.6px;width:141.79999999999995px;height:38.39999999999998px;background:#1a7df4;box-shadow:inset 0 1.5px 0 rgba(60,80,140,0.5);"></div><div class="t" style="left:1012.3px;transform:translateX(-50%);top:754.00px;font-size:20.8px;line-height:20.8px;font-weight:400;color:#ffffff;transform:translateX(-50%) scaleX(0.8173076923076923);transform-origin:50% 0;">OK</div><div style="position:absolute;left:1102px;top:743.4px;width:152.5999999999999px;height:42.80000000000007px;box-sizing:border-box;border-radius:4px;background:#fff;border:1px solid #ececec;border-bottom:1px solid #d8d8d8;"></div><div class="t" style="left:1177.8px;transform:translateX(-50%);top:756.00px;font-size:20.8px;line-height:20.8px;font-weight:400;color:#333333;transform:translateX(-50%) scaleX(0.8826923076923077);transform-origin:50% 0;">Cancel</div>
</body></html>
